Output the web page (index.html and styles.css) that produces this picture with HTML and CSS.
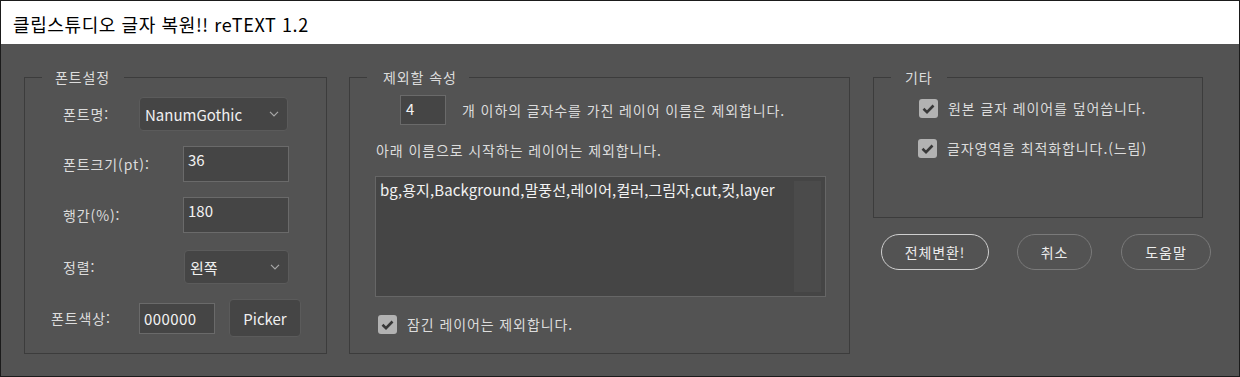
FILE: index.html
```html
<!DOCTYPE html>
<html lang="ko">
<head>
<meta charset="utf-8">
<title>reTEXT</title>
<link rel="stylesheet" href="styles.css">
</head>
<body>
<div class="window">
  <div class="titlebar">클립스튜디오 글자 복원!! reTEXT 1.2</div>
  <div class="content">
    <section class="group group-font">
      <span class="legend legend-font">폰트설정</span>
      <div class="row row-name">
        <span class="lbl lbl-name">폰트명:</span>
        <div class="select select-name"><span>NanumGothic</span><svg class="chev" width="10" height="6" viewBox="0 0 10 6"><path d="M1 0.8 L5 4.8 L9 0.8"/></svg></div>
      </div>
      <div class="row row-size">
        <span class="lbl lbl-size">폰트크기(pt):</span>
        <div class="input input-wide">36</div>
      </div>
      <div class="row row-lead">
        <span class="lbl lbl-size">행간(%):</span>
        <div class="input input-wide">180</div>
      </div>
      <div class="row row-align">
        <span class="lbl lbl-align">정렬:</span>
        <div class="select select-align"><span>왼쪽</span><svg class="chev" width="10" height="6" viewBox="0 0 10 6"><path d="M1 0.8 L5 4.8 L9 0.8"/></svg></div>
      </div>
      <div class="row row-color">
        <span class="lbl lbl-color">폰트색상:</span>
        <div class="input input-color">000000</div>
        <div class="btn-picker">Picker</div>
      </div>
    </section>

    <section class="group group-exclude">
      <span class="legend legend-exclude">제외할 속성</span>
      <div class="row row-count">
        <div class="input input-count">4</div>
        <span class="lbl">개 이하의 글자수를 가진 레이어 이름은 제외합니다.</span>
      </div>
      <p class="lbl note">아래 이름으로 시작하는 레이어는 제외합니다.</p>
      <div class="textbox">
        <span class="textbox-text">bg,용지,Background,말풍선,레이어,컬러,그림자,cut,컷,layer</span>
        <span class="scrolltrack"></span>
      </div>
      <div class="check-row check-locked">
        <span class="check"><svg width="19" height="19" viewBox="0 0 19 19"><path d="M4.5 9.8 L8 13.2 L14.5 6.5"/></svg></span>
        <span class="lbl">잠긴 레이어는 제외합니다.</span>
      </div>
    </section>

    <div class="col-right">
      <section class="group group-etc">
        <span class="legend legend-etc">기타</span>
        <div class="check-row check-1">
          <span class="check"><svg width="19" height="19" viewBox="0 0 19 19"><path d="M4.5 9.8 L8 13.2 L14.5 6.5"/></svg></span>
          <span class="lbl">원본 글자 레이어를 덮어씁니다.</span>
        </div>
        <div class="check-row check-2">
          <span class="check"><svg width="19" height="19" viewBox="0 0 19 19"><path d="M4.5 9.8 L8 13.2 L14.5 6.5"/></svg></span>
          <span class="lbl">글자영역을 최적화합니다.(느림)</span>
        </div>
      </section>
      <div class="buttons">
        <div class="pill pill-primary">전체변환!</div>
        <div class="pill pill-cancel">취소</div>
        <div class="pill pill-help">도움말</div>
      </div>
    </div>
  </div>
</div>
</body>
</html>
```

FILE: styles.css
```css
* { box-sizing: border-box; }
html, body { margin: 0; padding: 0; background: #535353; }
body {
  font-family: "Noto Sans CJK KR", sans-serif;
  font-size: 14px;
  color: #dcdcdc;
}
.window {
  width: 1240px;
  height: 377px;
  border: 1px solid #1b1b1b;
  background: #535353;
  overflow: hidden;
}
.titlebar {
  height: 43px;
  background: #ffffff;
  color: #000000;
  font-family: "Noto Sans CJK KR", sans-serif;
  font-size: 18px;
  line-height: 46px;
  padding-left: 12px;
  letter-spacing: 0.6px;
}
.content {
  display: flex;
  align-items: flex-start;
  padding: 33px 0 0 23px;
}
.group {
  position: relative;
  border: 1px solid #3c3c3c;
}
.group-font { width: 303px; height: 277px; padding-top: 19px; }
.group-exclude { width: 501px; height: 277px; margin-left: 22px; padding-top: 17px; }
.col-right { margin-left: 23px; display: flex; flex-direction: column; }
.group-etc { width: 330px; height: 141px; padding-top: 20px; }

.legend {
  position: absolute;
  top: -11px;
  left: 17px;
  line-height: 20px;
  padding: 0 14px;
  background: #535353;
  color: #dcdcdc;
  letter-spacing: 0.9px;
}
.legend-font { padding-left: 13px; padding-right: 14px; }
.legend-exclude { padding-left: 16px; padding-right: 12px; }

.lbl { line-height: 20px; white-space: nowrap; letter-spacing: 0.9px; }

.row { display: flex; align-items: center; }
.row-name { padding-left: 38px; }
.row-size { padding-left: 38px; margin-top: 15px; }
.row-lead { padding-left: 38px; margin-top: 15px; }
.row-align { padding-left: 38px; margin-top: 17px; }
.row-color { padding-left: 26px; margin-top: 15px; }

.lbl-name { width: 76px; }
.lbl-size { width: 120px; }
.lbl-align { width: 121px; }
.lbl-color { width: 88px; }

.select {
  display: flex;
  align-items: center;
  justify-content: space-between;
  height: 34px;
  background: #454545;
  border: 1px solid #5b5b5b;
  border-radius: 4px;
  padding: 0 8px 0 5px;
  color: #f0f0f0;
  font-size: 15px;
}
.select-name { width: 149px; }
.select-align { width: 105px; }
.chev path { fill: none; stroke: #a8a8a8; stroke-width: 1.2; }

.input {
  background: #454545;
  border: 1px solid #6a6a6a;
  color: #f2f2f2;
  font-size: 15px;
  line-height: 20px;
  padding: 3px 4px;
}
.input-wide { width: 106px; height: 36px; }
.input-color { width: 76px; height: 31px; padding-top: 5px; letter-spacing: 0.4px; }
.input-count { width: 46px; height: 30px; padding-left: 5px; }

.btn-picker {
  width: 72px;
  height: 38px;
  margin-left: 14px;
  background: #454545;
  border: 1px solid #5b5b5b;
  border-radius: 4px;
  color: #f0f0f0;
  font-size: 15px;
  display: flex;
  align-items: center;
  justify-content: center;
}

.row-count { padding-left: 50px; }
.row-count .lbl { margin-left: 16px; }
.note { margin: 15px 0 0 26px; }
.textbox {
  display: flex;
  justify-content: space-between;
  width: 451px;
  height: 121px;
  margin: 16px 0 0 25px;
  background: #454545;
  border: 1px solid #666666;
  padding: 3px 4px 4px 4px;
  color: #f2f2f2;
  font-size: 15px;
  line-height: 20px;
  letter-spacing: 0.1px;
}
.scrolltrack {
  width: 27px;
  height: 111px;
  margin-top: 1px;
  background: #4b4b4b;
}

.check-row { display: flex; align-items: center; }
.check {
  width: 19px;
  height: 19px;
  border-radius: 3px;
  background: #b2b2b2;
  display: flex;
}
.check path { fill: none; stroke: #383838; stroke-width: 2.6; }
.check-row .lbl { margin-left: 10px; }
.check-locked { margin: 17px 0 0 28px; }
.check-1 { margin-left: 45px; }
.check-2 { margin: 20px 0 0 44px; }

.buttons { display: flex; margin: 16px 0 0 8px; }
.pill {
  height: 36px;
  border-radius: 18px;
  border: 1px solid #7a7a7a;
  color: #ececec;
  letter-spacing: 0.9px;
  display: flex;
  align-items: center;
  justify-content: center;
}
.pill-primary { width: 108px; border: 1.5px solid #cfcfcf; }
.pill-cancel { width: 75px; margin-left: 28px; }
.pill-help { width: 90px; margin-left: 29px; }
```
